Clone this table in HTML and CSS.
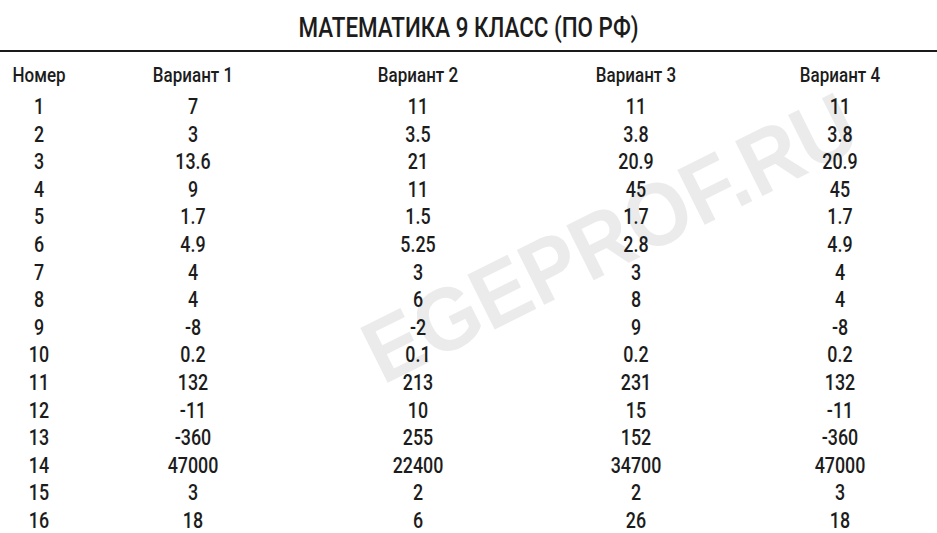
FILE: index.html
```html
<!DOCTYPE html>
<html lang="ru">
<head>
<meta charset="utf-8">
<title>Математика 9 класс</title>
<link rel="stylesheet" href="styles.css">
</head>
<body>
<div class="page">
  <h1 class="title"><span class="narrow">МАТЕМАТИКА 9 КЛАСС (ПО РФ)</span></h1>
  <div class="rule"></div>
  <div class="table">
    <div class="row head"><span>Номер</span><span>Вариант 1</span><span>Вариант 2</span><span>Вариант 3</span><span>Вариант 4</span></div>
    <div class="row"><span>1</span><span>7</span><span>11</span><span>11</span><span>11</span></div>
    <div class="row"><span>2</span><span>3</span><span>3.5</span><span>3.8</span><span>3.8</span></div>
    <div class="row"><span>3</span><span>13.6</span><span>21</span><span>20.9</span><span>20.9</span></div>
    <div class="row"><span>4</span><span>9</span><span>11</span><span>45</span><span>45</span></div>
    <div class="row"><span>5</span><span>1.7</span><span>1.5</span><span>1.7</span><span>1.7</span></div>
    <div class="row"><span>6</span><span>4.9</span><span>5.25</span><span>2.8</span><span>4.9</span></div>
    <div class="row"><span>7</span><span>4</span><span>3</span><span>3</span><span>4</span></div>
    <div class="row"><span>8</span><span>4</span><span>6</span><span>8</span><span>4</span></div>
    <div class="row"><span>9</span><span>-8</span><span>-2</span><span>9</span><span>-8</span></div>
    <div class="row"><span>10</span><span>0.2</span><span>0.1</span><span>0.2</span><span>0.2</span></div>
    <div class="row"><span>11</span><span>132</span><span>213</span><span>231</span><span>132</span></div>
    <div class="row"><span>12</span><span>-11</span><span>10</span><span>15</span><span>-11</span></div>
    <div class="row"><span>13</span><span>-360</span><span>255</span><span>152</span><span>-360</span></div>
    <div class="row"><span>14</span><span>47000</span><span>22400</span><span>34700</span><span>47000</span></div>
    <div class="row"><span>15</span><span>3</span><span>2</span><span>2</span><span>3</span></div>
    <div class="row"><span>16</span><span>18</span><span>6</span><span>26</span><span>18</span></div>
  </div>
  <div class="watermark">EGEPROF.RU</div>
</div>
</body>
</html>
```
FILE: styles.css
```css
html, body {
  margin: 0;
  padding: 0;
  background: #ffffff;
}
.page {
  position: relative;
  width: 937px;
  height: 533px;
  overflow: hidden;
  font-family: "Roboto", "DejaVu Sans Condensed", sans-serif;
  font-weight: 500;
  color: #1c1c1c;
}
.title {
  margin: 0;
  height: 50px;
  box-sizing: border-box;
  padding-top: 4px;
  display: flex;
  align-items: center;
  justify-content: center;
  font-size: 28px;
  font-weight: 500;
  position: relative;
  z-index: 1;
}
.narrow {
  display: inline-block;
  white-space: nowrap;
  transform: scaleX(0.8);
}
.rule {
  height: 2px;
  background: #1a1a1a;
}
.table {
  position: relative;
  z-index: 1;
  margin-top: 8px;
}
.row {
  display: grid;
  grid-template-columns: 78px 230px 220px 216px 192px;
  height: 27.6px;
  line-height: 27.6px;
  font-size: 21.5px;
  text-align: center;
}
.row span {
  display: inline-block;
  white-space: nowrap;
  transform: scaleX(0.83);
}
.row.head {
  height: 33px;
  line-height: 30px;
  font-size: 20px;
}
.row.head span {
  transform: scaleX(0.85);
}
.watermark {
  position: absolute;
  left: 610px;
  top: 238px;
  transform: translate(-50%, -50%) rotate(-26.5deg) scaleX(0.93);
  font-family: "Liberation Sans", Arial, sans-serif;
  font-weight: 700;
  font-size: 89px;
  color: #ebebeb;
  white-space: nowrap;
  z-index: 0;
  line-height: 1;
}
```
